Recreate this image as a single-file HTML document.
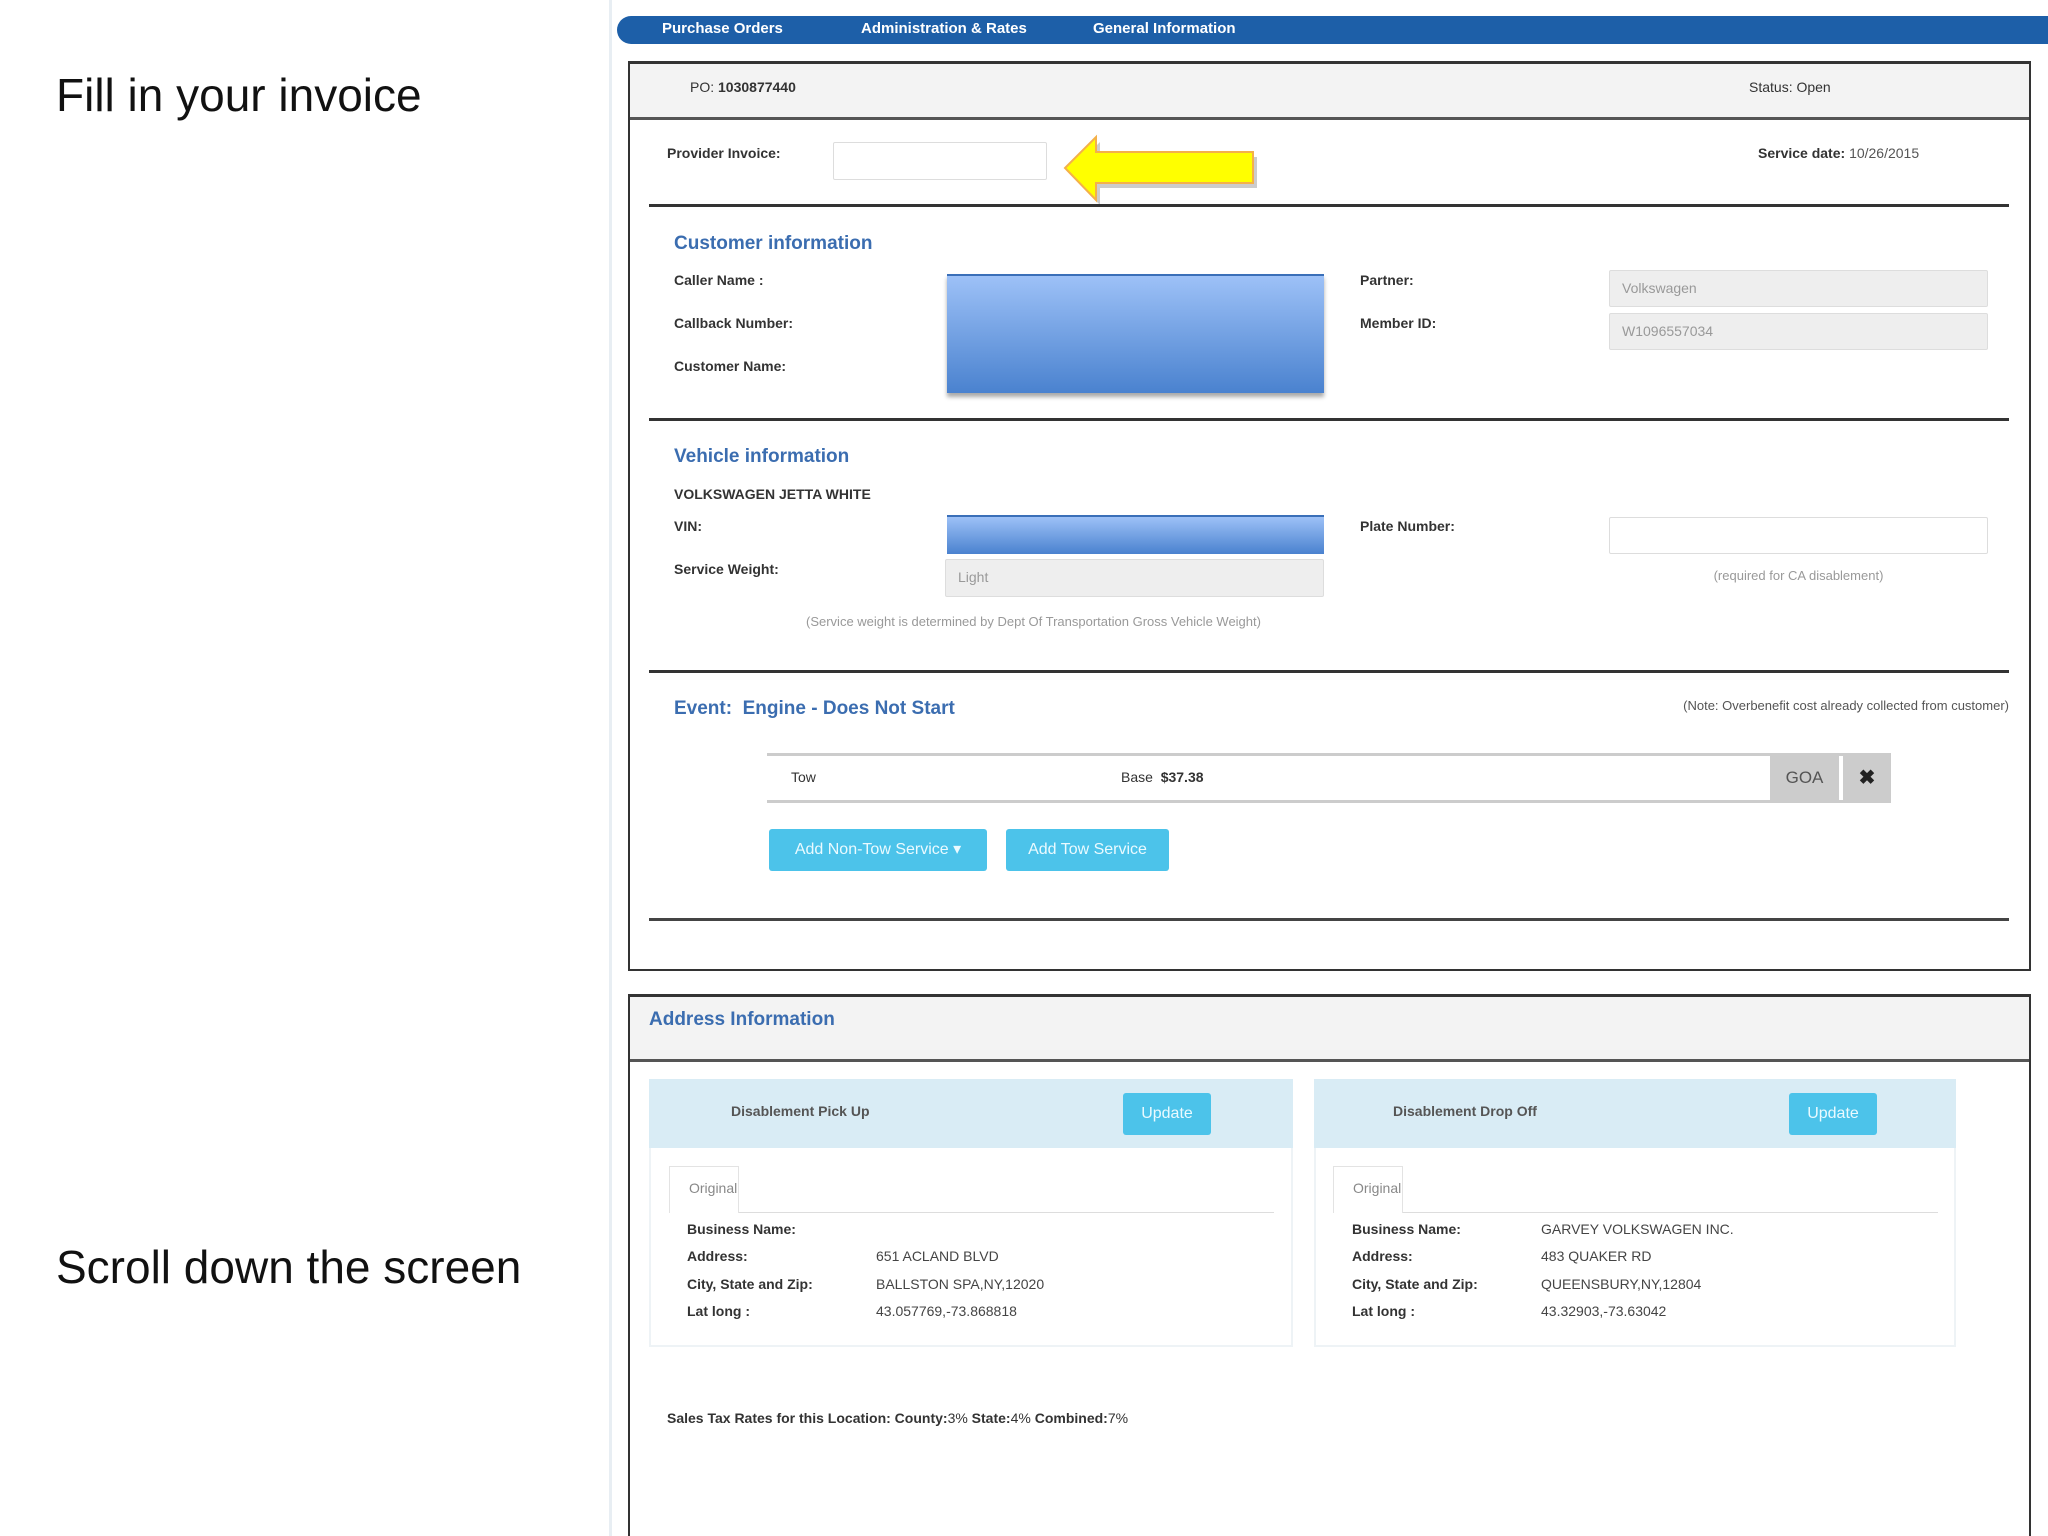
<!DOCTYPE html>
<html style="width:2048px;height:1536px;overflow:hidden"><head><meta charset="utf-8"><style>
*{margin:0;padding:0;box-sizing:border-box}
body{width:2048px;height:1536px;position:relative;background:#fff;font-family:"Liberation Sans",Arial,sans-serif;overflow:hidden;color:#222}
.a{position:absolute}
.big{font-size:46px;color:#111;font-family:"Liberation Sans",sans-serif}
.lb{font-size:14px;font-weight:bold;color:#333}
.t{font-size:14px;color:#444}
.g{font-size:13px;color:#999}
.h{font-size:19px;font-weight:bold;color:#3b6db0}
.hr{position:absolute;left:649px;width:1360px;height:3px;background:#333}
.in{position:absolute;border:1px solid #ddd;background:#fff;border-radius:2px}
.gi{position:absolute;border:1px solid #ddd;background:#eee;border-radius:2px;font-size:14px;color:#999;padding:9px 12px}
.blue{position:absolute;background:linear-gradient(#9dc1f7,#4a82cf);border-top:2px solid #3a6fb8;box-shadow:0 4px 4px #aaa}
.btn{position:absolute;background:#4cc3ea;color:#eafaff;font-size:16px;text-align:center;border-radius:3px}
</style></head><body>
<div class="a" style="left:609px;top:0;width:3px;height:1536px;background:#e8eef3"></div>
<div class="a big" style="left:56px;top:68px">Fill in your invoice</div>
<div class="a big" style="left:56px;top:1240px">Scroll down the screen</div>

<div class="a" style="left:617px;top:16px;width:1440px;height:28px;background:#1d5fa8;border-radius:14px 0 0 14px"></div>
<div class="a" style="left:662px;top:20px;color:#fff;font-size:15px;font-weight:bold">Purchase Orders</div>
<div class="a" style="left:861px;top:20px;color:#fff;font-size:15px;font-weight:bold">Administration &amp; Rates</div>
<div class="a" style="left:1093px;top:20px;color:#fff;font-size:15px;font-weight:bold">General Information</div>

<div class="a" style="left:628px;top:61px;width:1403px;height:910px;border:2px solid #333;border-top-width:3px"></div>
<div class="a" style="left:630px;top:64px;width:1399px;height:56px;background:#f3f3f3;border-bottom:3px solid #555"></div>
<div class="a t" style="left:690px;top:79px;color:#333">PO: <b>1030877440</b></div>
<div class="a t" style="left:1749px;top:79px;color:#333">Status: Open</div>

<div class="a lb" style="left:667px;top:145px">Provider Invoice:</div>
<div class="in" style="left:833px;top:142px;width:214px;height:38px"></div>
<svg class="a" style="left:1060px;top:132px" width="200" height="75"><path d="M5 36 L36 5 L36 20 L193 20 L193 51 L36 51 L36 68 Z" fill="#aaa" transform="translate(4,5)" opacity=".6"/><path d="M5 36 L36 5 L36 20 L193 20 L193 51 L36 51 L36 68 Z" fill="#ffff00" stroke="#f4b04a" stroke-width="2"/></svg>
<div class="a lb" style="left:1758px;top:145px">Service date: <span style="font-weight:normal;color:#555">10/26/2015</span></div>
<div class="hr" style="top:204px"></div>

<div class="a h" style="left:674px;top:233px">Customer information</div>
<div class="a lb" style="left:674px;top:272px">Caller Name :</div>
<div class="a lb" style="left:674px;top:315px">Callback Number:</div>
<div class="a lb" style="left:674px;top:358px">Customer Name:</div>
<div class="blue" style="left:947px;top:274px;width:377px;height:119px"></div>
<div class="a lb" style="left:1360px;top:272px">Partner:</div>
<div class="a lb" style="left:1360px;top:315px">Member ID:</div>
<div class="gi" style="left:1609px;top:270px;width:379px;height:37px">Volkswagen</div>
<div class="gi" style="left:1609px;top:313px;width:379px;height:37px">W1096557034</div>
<div class="hr" style="top:418px"></div>

<div class="a h" style="left:674px;top:446px">Vehicle information</div>
<div class="a lb" style="left:674px;top:486px">VOLKSWAGEN JETTA WHITE</div>
<div class="a lb" style="left:674px;top:518px">VIN:</div>
<div class="a lb" style="left:674px;top:561px">Service Weight:</div>
<div class="blue" style="left:947px;top:515px;width:377px;height:39px;box-shadow:none"></div>
<div class="gi" style="left:945px;top:559px;width:379px;height:38px">Light</div>
<div class="a g" style="left:806px;top:614px">(Service weight is determined by Dept Of Transportation Gross Vehicle Weight)</div>
<div class="a lb" style="left:1360px;top:518px">Plate Number:</div>
<div class="in" style="left:1609px;top:517px;width:379px;height:37px"></div>
<div class="a g" style="left:1609px;top:568px;width:379px;text-align:center">(required for CA disablement)</div>
<div class="hr" style="top:670px"></div>

<div class="a h" style="left:674px;top:698px">Event:&nbsp; Engine - Does Not Start</div>
<div class="a g" style="left:1500px;top:698px;width:509px;text-align:right;color:#555">(Note: Overbenefit cost already collected from customer)</div>
<div class="a" style="left:767px;top:753px;width:1124px;height:50px;border-top:3px solid #ccc;border-bottom:3px solid #ccc"></div>
<div class="a t" style="left:791px;top:769px;color:#333">Tow</div>
<div class="a t" style="left:1121px;top:769px;color:#333">Base&nbsp; <b>$37.38</b></div>
<div class="a" style="left:1770px;top:756px;width:69px;height:44px;background:#ccc;color:#555;font-size:17px;text-align:center;line-height:44px">GOA</div>
<div class="a" style="left:1843px;top:756px;width:48px;height:44px;background:#ccc;color:#222;font-size:20px;font-weight:bold;text-align:center;line-height:44px">✖</div>
<div class="btn" style="left:769px;top:829px;width:218px;height:42px;line-height:42px">Add Non-Tow Service ▾</div>
<div class="btn" style="left:1006px;top:829px;width:163px;height:42px;line-height:42px">Add Tow Service</div>
<div class="hr" style="top:918px;background:#444"></div>

<div class="a" style="left:628px;top:994px;width:1403px;height:600px;border:2px solid #333;border-top-width:3px"></div>
<div class="a" style="left:630px;top:997px;width:1399px;height:65px;background:#f3f3f3;border-bottom:3px solid #555"></div>
<div class="a h" style="left:649px;top:1009px">Address Information</div>

<div class="a" style="left:649px;top:1079px;width:644px;height:268px;border:2px solid #eef3f6"></div>
<div class="a" style="left:649px;top:1079px;width:644px;height:69px;background:#d9ecf5"></div>
<div class="a lb" style="left:731px;top:1103px;color:#555;font-weight:bold">Disablement Pick Up</div>
<div class="btn" style="left:1123px;top:1093px;width:88px;height:42px;line-height:42px">Update</div>
<div class="a" style="left:669px;top:1166px;width:70px;height:47px;border:1px solid #e3e3e3;border-bottom:none;background:#fff;font-size:14px;color:#888;padding:13px 0 0 19px">Original</div>
<div class="a" style="left:739px;top:1212px;width:535px;height:1px;background:#ddd"></div>
<div class="a lb" style="left:687px;top:1221px">Business Name:</div>
<div class="a lb" style="left:687px;top:1248px">Address:</div><div class="a t" style="left:876px;top:1248px">651 ACLAND BLVD</div>
<div class="a lb" style="left:687px;top:1276px">City, State and Zip:</div><div class="a t" style="left:876px;top:1276px">BALLSTON SPA,NY,12020</div>
<div class="a lb" style="left:687px;top:1303px">Lat long :</div><div class="a t" style="left:876px;top:1303px">43.057769,-73.868818</div>

<div class="a" style="left:1314px;top:1079px;width:642px;height:268px;border:2px solid #eef3f6"></div>
<div class="a" style="left:1314px;top:1079px;width:642px;height:69px;background:#d9ecf5"></div>
<div class="a lb" style="left:1393px;top:1103px;color:#555">Disablement Drop Off</div>
<div class="btn" style="left:1789px;top:1093px;width:88px;height:42px;line-height:42px">Update</div>
<div class="a" style="left:1333px;top:1166px;width:70px;height:47px;border:1px solid #e3e3e3;border-bottom:none;background:#fff;font-size:14px;color:#888;padding:13px 0 0 19px">Original</div>
<div class="a" style="left:1403px;top:1212px;width:535px;height:1px;background:#ddd"></div>
<div class="a lb" style="left:1352px;top:1221px">Business Name:</div><div class="a t" style="left:1541px;top:1221px">GARVEY VOLKSWAGEN INC.</div>
<div class="a lb" style="left:1352px;top:1248px">Address:</div><div class="a t" style="left:1541px;top:1248px">483 QUAKER RD</div>
<div class="a lb" style="left:1352px;top:1276px">City, State and Zip:</div><div class="a t" style="left:1541px;top:1276px">QUEENSBURY,NY,12804</div>
<div class="a lb" style="left:1352px;top:1303px">Lat long :</div><div class="a t" style="left:1541px;top:1303px">43.32903,-73.63042</div>

<div class="a lb" style="left:667px;top:1410px">Sales Tax Rates for this Location: County:<span style="font-weight:normal">3%</span> State:<span style="font-weight:normal">4%</span> Combined:<span style="font-weight:normal">7%</span></div>
</body></html>
